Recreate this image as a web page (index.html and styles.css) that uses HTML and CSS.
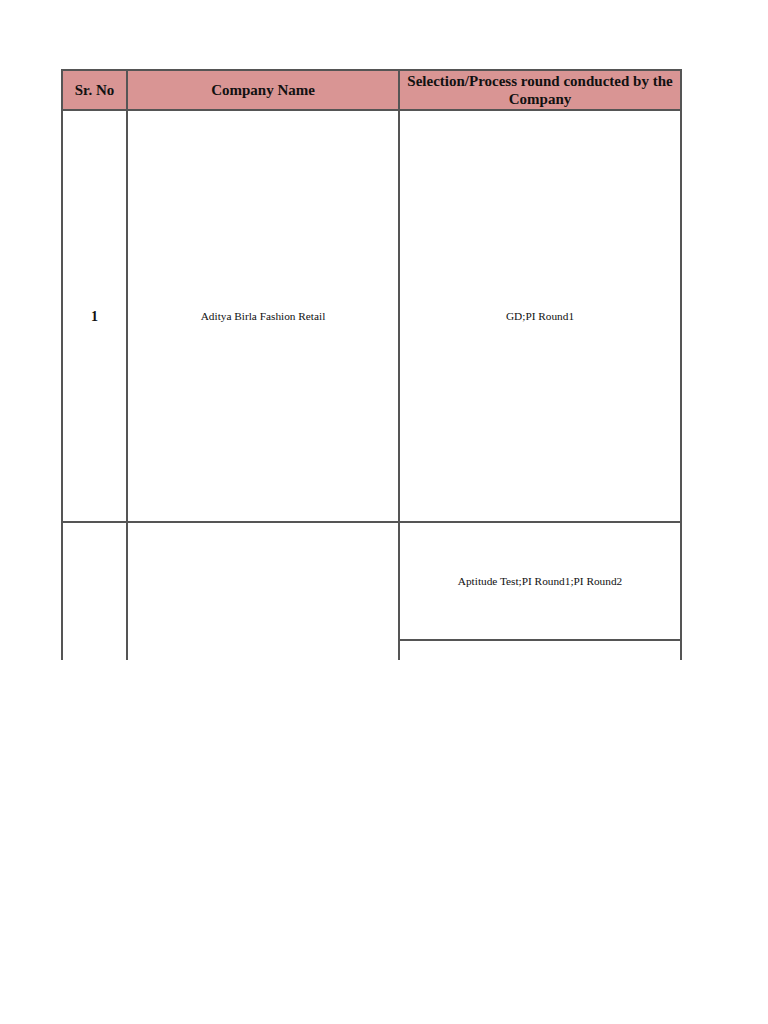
FILE: index.html
```html
<!DOCTYPE html>
<html>
<head>
<meta charset="utf-8">
<link rel="stylesheet" href="styles.css">
</head>
<body>
<div class="page">
  <div class="clip">
    <table class="sheet">
      <colgroup>
        <col class="c1"><col class="c2"><col class="c3">
      </colgroup>
      <tr class="head">
        <th>Sr. No</th>
        <th>Company Name</th>
        <th>Selection/Process round conducted by the Company</th>
      </tr>
      <tr class="r1">
        <td class="num">1</td>
        <td>Aditya Birla Fashion Retail</td>
        <td>GD;PI Round1</td>
      </tr>
      <tr class="r2a">
        <td class="num" rowspan="2"></td>
        <td rowspan="2"></td>
        <td>Aptitude Test;PI Round1;PI Round2</td>
      </tr>
      <tr class="r2b">
        <td></td>
      </tr>
    </table>
  </div>
</div>
</body>
</html>
```
FILE: styles.css
```css
html, body {
  margin: 0;
  padding: 0;
  background: #ffffff;
}
.page {
  padding: 69px 0 0 61px;
}
.clip {
  width: 622px;
  height: 591px;
  overflow: hidden;
}
.sheet {
  border-collapse: collapse;
  table-layout: fixed;
  width: 621px;
  font-family: "Liberation Serif", "Times New Roman", serif;
  color: #111;
}
.c1 { width: 65px; }
.c2 { width: 272px; }
.c3 { width: 282px; }
.sheet th, .sheet td {
  border: 2px solid #555555;
  text-align: center;
  vertical-align: middle;
  padding: 0 2px;
}
.head th {
  background: #d99594;
  font-weight: bold;
  font-size: 15px;
  line-height: 18px;
  height: 38px;
}
.sheet td {
  font-size: 11.3px;
  line-height: 13px;
}
.sheet td.num {
  font-weight: bold;
  font-size: 14px;
}
.r1 td { height: 410px; }
.r2a td { height: 116px; }
.r2b td { height: 200px; }
```
